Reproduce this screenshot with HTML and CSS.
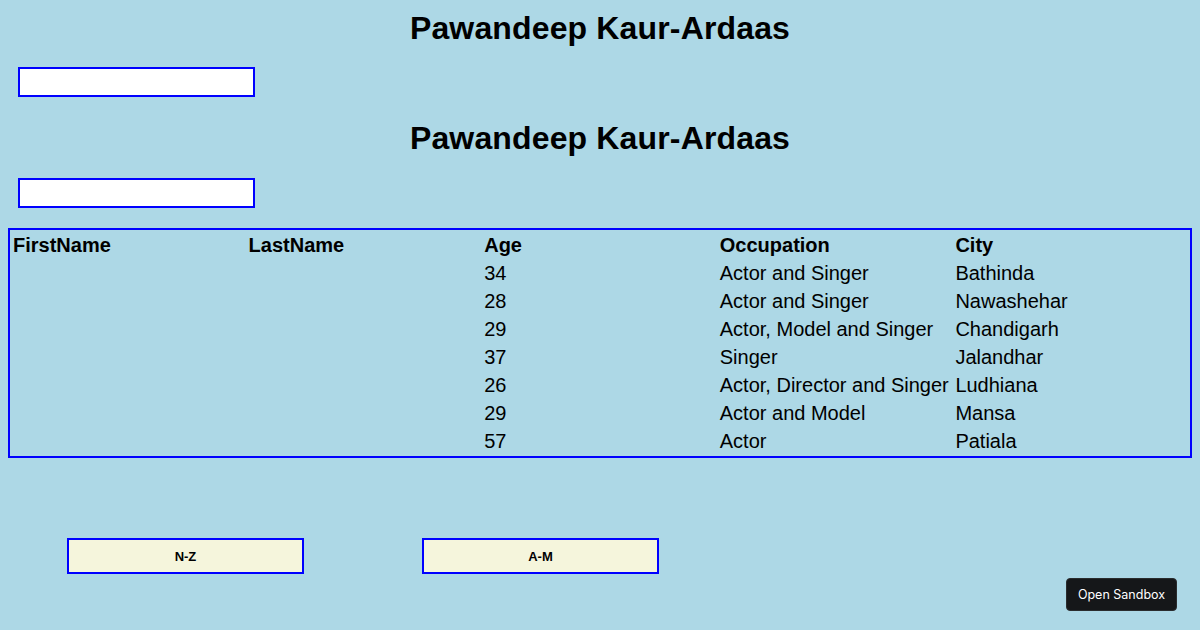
FILE: index.html
```html
<!DOCTYPE html>
<html>
<head>
<meta charset="utf-8">
<link rel="stylesheet" href="styles.css">
</head>
<body>
<div class="app">
  <h1 class="title first">Pawandeep Kaur-Ardaas</h1>
  <div class="search-row first"><input class="search" type="text"></div>
  <h1 class="title">Pawandeep Kaur-Ardaas</h1>
  <div class="search-row"><input class="search" type="text"></div>
  <table class="people">
    <thead>
      <tr><th>FirstName</th><th>LastName</th><th>Age</th><th>Occupation</th><th>City</th></tr>
    </thead>
    <tbody>
      <tr><td></td><td></td><td>34</td><td>Actor and Singer</td><td>Bathinda</td></tr>
      <tr><td></td><td></td><td>28</td><td>Actor and Singer</td><td>Nawashehar</td></tr>
      <tr><td></td><td></td><td>29</td><td>Actor, Model and Singer</td><td>Chandigarh</td></tr>
      <tr><td></td><td></td><td>37</td><td>Singer</td><td>Jalandhar</td></tr>
      <tr><td></td><td></td><td>26</td><td>Actor, Director and Singer</td><td>Ludhiana</td></tr>
      <tr><td></td><td></td><td>29</td><td>Actor and Model</td><td>Mansa</td></tr>
      <tr><td></td><td></td><td>57</td><td>Actor</td><td>Patiala</td></tr>
    </tbody>
  </table>
  <div class="sort-row">
    <button class="sort-btn">N-Z</button>
    <button class="sort-btn">A-M</button>
  </div>
</div>
<a class="sandbox-badge">Open Sandbox</a>
</body>
</html>
```

FILE: styles.css
```css
html, body {
  margin: 0;
  padding: 0;
}
body {
  background: #add8e6;
  font-family: "Liberation Sans", Arial, sans-serif;
  color: #000;
  padding: 8px;
  height: 630px;
  box-sizing: border-box;
  overflow: hidden;
}
.title {
  margin: 23px 0 0;
  font-size: 32px;
  line-height: 37px;
  font-weight: bold;
  text-align: center;
  letter-spacing: 0.15px;
}
.title.first {
  margin-top: 2px;
}
.search-row {
  margin-top: 21px;
  height: 30px;
  padding-left: 10px;
}
.search-row.first {
  margin-top: 20px;
}
.search {
  display: block;
  width: 237px;
  height: 30px;
  box-sizing: border-box;
  border: 2px solid #0000ff;
  background: #fff;
  margin: 0;
  padding: 2px 4px;
}
.people {
  margin-top: 20px;
  width: 100%;
  table-layout: fixed;
  border: 2px solid #0000ff;
  border-spacing: 2px;
  font-size: 20px;
}
.people th, .people td {
  padding: 1px;
  line-height: 24px;
  text-align: left;
  white-space: nowrap;
}
.people th {
  font-weight: bold;
}
.sort-row {
  display: flex;
  margin-top: 80px;
}
.sort-btn {
  width: 237px;
  height: 36px;
  margin: 0 59px;
  box-sizing: border-box;
  border: 2px solid #0000ff;
  background: #f5f5dc;
  font-family: "Liberation Sans", Arial, sans-serif;
  font-weight: bold;
  font-size: 13px;
  color: #000;
  padding: 0;
}
.sandbox-badge {
  position: fixed;
  right: 23px;
  bottom: 19px;
  width: 111px;
  height: 33px;
  box-sizing: border-box;
  display: flex;
  align-items: center;
  justify-content: center;
  background: #151719;
  color: #fff;
  border-radius: 4px;
  border: 1px solid #2a2c2e;
  font-family: Inter, "Liberation Sans", sans-serif;
  font-size: 12.5px;
}
```
